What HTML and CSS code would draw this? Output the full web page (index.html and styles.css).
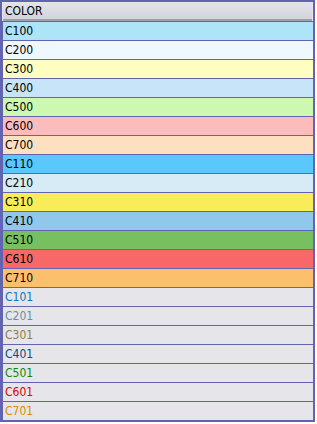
FILE: index.html
```html
<!DOCTYPE html>
<html>
<head>
<meta charset="utf-8">
<link rel="stylesheet" href="styles.css">
</head>
<body>
<div class="grid">
  <div class="header"><span>COLOR</span></div>
  <div class="row c100">C100</div>
  <div class="row c200">C200</div>
  <div class="row c300">C300</div>
  <div class="row c400">C400</div>
  <div class="row c500">C500</div>
  <div class="row c600">C600</div>
  <div class="row c700">C700</div>
  <div class="row c110">C110</div>
  <div class="row c210">C210</div>
  <div class="row c310">C310</div>
  <div class="row c410">C410</div>
  <div class="row c510">C510</div>
  <div class="row c610">C610</div>
  <div class="row c710">C710</div>
  <div class="row plain c101">C101</div>
  <div class="row plain c201">C201</div>
  <div class="row plain c301">C301</div>
  <div class="row plain c401">C401</div>
  <div class="row plain c501">C501</div>
  <div class="row plain c601">C601</div>
  <div class="row plain c701">C701</div>
</div>
</body>
</html>
```
FILE: styles.css
```css
html, body {
  margin: 0;
  padding: 0;
  background: #ffffff;
}
.grid {
  width: 311px;
  height: 418px;
  border: 2px solid #6264b0;
  background: #e6e6ea;
  font-family: "DejaVu Sans Condensed", "DejaVu Sans", Verdana, sans-serif;
  font-stretch: condensed;
  font-size: 12px;
  color: #000;
  display: flex;
  flex-direction: column;
  overflow: hidden;
}
.header {
  height: 18px;
  box-sizing: border-box;
  margin: 1px 1px 0 1px;
  background: linear-gradient(#e2e2ea, #d4d4dc);
  border-bottom: 2px solid #a0a0a8;
  display: flex;
  align-items: center;
  padding-left: 2px;
}
.row {
  height: 18px;
  flex: 0 0 18px;
  border-top: 1px solid #6264b0;
  border-left: 1px solid #6264b0;
  display: flex;
  align-items: center;
  padding-left: 2px;
}
.c100 { background: #aee4f8; }
.c200 { background: #eef8fe; }
.c300 { background: #fefec0; }
.c400 { background: #c8e4f8; }
.c500 { background: #ccf8b0; }
.c600 { background: #fdbcbc; }
.c700 { background: #fde0c0; }
.c110 { background: #5ac8fa; }
.c210 { background: #d6ebf5; }
.c310 { background: #f8ec5a; }
.c410 { background: #90c8ec; }
.c510 { background: #76c060; }
.c610 { background: #f86868; }
.c710 { background: #fcc06c; }
.plain { background: #e6e6ea; }
.c101 { color: #0878b8; }
.c201 { color: #6890a0; }
.c301 { color: #908040; }
.c401 { color: #0a4a88; }
.c501 { color: #108808; }
.c601 { color: #e00000; }
.c701 { color: #e08808; }
```
